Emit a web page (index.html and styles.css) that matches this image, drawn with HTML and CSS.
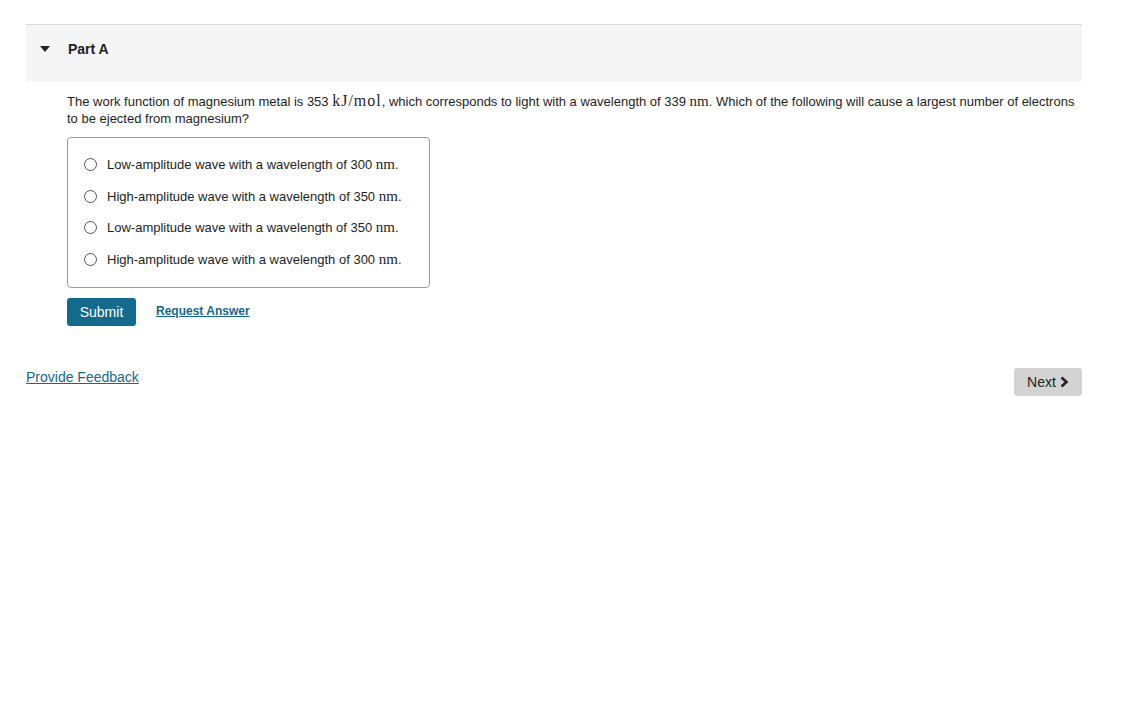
FILE: index.html
```html
<!DOCTYPE html>
<html>
<head>
<meta charset="utf-8">
<link rel="stylesheet" href="styles.css">
</head>
<body>
<div class="page">
  <section class="part">
    <div class="part-header">
      <span class="caret"></span>
      <span class="part-title">Part A</span>
    </div>
    <div class="part-body">
      <p class="question">The work function of magnesium metal is 353 <span class="math wide">kJ/mol</span>, which corresponds to light with a wavelength of 339 <span class="math">nm</span>. Which of the following will cause a largest number of electrons to be ejected from magnesium?</p>
      <div class="options">
        <label class="option"><span class="radio"></span><span>Low-amplitude wave with a wavelength of 300 <span class="math">nm</span>.</span></label>
        <label class="option"><span class="radio"></span><span>High-amplitude wave with a wavelength of 350 <span class="math">nm</span>.</span></label>
        <label class="option"><span class="radio"></span><span>Low-amplitude wave with a wavelength of 350 <span class="math">nm</span>.</span></label>
        <label class="option"><span class="radio"></span><span>High-amplitude wave with a wavelength of 300 <span class="math">nm</span>.</span></label>
      </div>
      <div class="actions">
        <button class="submit">Submit</button>
        <a class="request" href="#">Request Answer</a>
      </div>
    </div>
  </section>
  <div class="footer">
    <a class="feedback" href="#">Provide Feedback</a>
    <button class="next">Next <svg width="10" height="12" viewBox="0 0 10 12"><path d="M2.5 1.5 L7.5 6 L2.5 10.5" fill="none" stroke="#222" stroke-width="2.6"/></svg></button>
  </div>
</div>
</body>
</html>
```
FILE: styles.css
```css
html, body {
  margin: 0;
  padding: 0;
  background: #fff;
}
body {
  font-family: "Liberation Sans", Arial, sans-serif;
  color: #222;
}
.page {
  width: 1056px;
  margin-left: 26px;
  padding-top: 24px;
}
.part {
  border-top: 1px solid #d9d9d9;
}
.part-header {
  background: #f5f5f5;
  height: 57px;
  display: flex;
  align-items: flex-start;
  padding-left: 14px;
  box-sizing: border-box;
  padding-top: 16px;
}
.caret {
  width: 0;
  height: 0;
  border-left: 5.5px solid transparent;
  border-right: 5.5px solid transparent;
  border-top: 6px solid #222;
  margin-right: 18px;
  margin-top: 5px;
}
.part-title {
  font-weight: bold;
  font-size: 14px;
  line-height: 16px;
  color: #222;
}
.part-body {
  padding-left: 41px;
}
.question {
  margin: 11px 0 0 0;
  font-size: 13px;
  line-height: 17px;
  color: #1e1e1e;
}
.math {
  font-family: "Liberation Serif", "Times New Roman", serif;
  font-size: 15px;
  line-height: 0;
}
.math.wide {
  font-size: 16px;
  letter-spacing: 1px;
}
.options {
  margin-top: 10px;
  width: 363px;
  height: 151px;
  border: 1px solid #999;
  border-radius: 4px;
  box-sizing: border-box;
  padding: 17px 0 0 16px;
  display: flex;
  flex-direction: column;
  gap: 12.6px;
}
.option {
  display: flex;
  align-items: center;
  font-size: 13px;
  height: 19px;
  color: #1e1e1e;
}
.radio {
  width: 11px;
  height: 11px;
  border: 1px solid #555;
  border-radius: 50%;
  margin-right: 10px;
  flex-shrink: 0;
}
.actions {
  display: flex;
  align-items: center;
  margin-top: 10px;
}
.submit {
  background: #146a8c;
  color: #fff;
  border: none;
  border-radius: 3px;
  font-family: "Liberation Sans", Arial, sans-serif;
  font-size: 14px;
  width: 69px;
  height: 28px;
  padding: 0;
  cursor: pointer;
}
.request {
  margin-left: 20px;
  font-size: 12px;
  font-weight: bold;
  color: #146a8c;
  text-decoration: underline;
  margin-top: -2px;
}
.footer {
  display: flex;
  justify-content: space-between;
  align-items: flex-start;
  margin-top: 41px;
}
.feedback {
  font-size: 14px;
  color: #146a8c;
  text-decoration: underline;
  margin-top: 2px;
}
.next {
  background: #d3d3d3;
  border: none;
  border-radius: 3px;
  font-family: "Liberation Sans", Arial, sans-serif;
  font-size: 14px;
  color: #222;
  width: 68px;
  height: 28px;
  padding: 0;
  display: flex;
  align-items: center;
  justify-content: center;
  gap: 3px;
  margin-top: 1px;
}
```
